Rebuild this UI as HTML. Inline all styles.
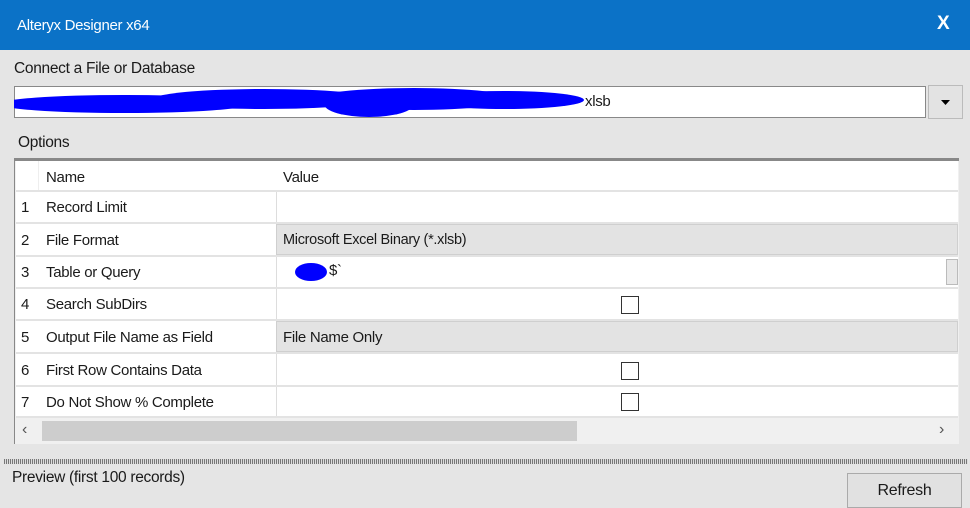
<!DOCTYPE html>
<html><head><meta charset="utf-8"><style>
*{margin:0;padding:0;box-sizing:border-box}
body{width:970px;height:508px;background:#e5e5e5;font-family:"Liberation Sans",sans-serif;font-size:15px;color:#1a1a1a;position:relative;overflow:hidden;letter-spacing:-0.3px}
.a{position:absolute}
.title{left:0;top:0;width:970px;height:50px;background:#0b72c7;color:#fff}
.row{position:absolute;left:16px;width:942px;border-bottom:2px solid #e3e3e3;background:#fff}
.num{position:absolute;left:5px}
.nm{position:absolute;left:30px}
.val{position:absolute;left:260px;right:0;top:0;bottom:0;border-left:1px solid #ddd}
.grey{background:#e3e3e3;border:1px solid #cfcfcf}
.cb{position:absolute;left:344px;width:18px;height:18px;border:1.5px solid #333;background:#fff}
</style></head><body>
<div class="a title"><span class="a" style="left:17px;top:17px;font-size:15px">Alteryx Designer x64</span><span class="a" style="left:937px;top:13px;font-size:19px;font-weight:bold">X</span></div>
<div class="a" style="left:14px;top:60px;font-size:15.5px">Connect a File or Database</div>
<div class="a" style="left:14px;top:86px;width:912px;height:32px;background:#fff;border:1px solid #888"></div>
<svg class="a" style="left:14px;top:86px" width="600" height="34"><ellipse cx="110" cy="18" rx="125" ry="9" fill="#0000ff"/><ellipse cx="250" cy="13" rx="110" ry="10" fill="#0000ff"/><ellipse cx="400" cy="13" rx="100" ry="11" fill="#0000ff"/><ellipse cx="490" cy="14" rx="80" ry="9" fill="#0000ff"/><ellipse cx="355" cy="18" rx="45" ry="13" fill="#0000ff"/></svg>
<div class="a" style="left:585px;top:93px">xlsb</div>
<div class="a" style="left:928px;top:85px;width:35px;height:34px;border:1px solid #bbb;background:#e3e3e3"></div>
<svg class="a" style="left:941px;top:100px" width="10" height="6"><path d="M0 0H9L4.5 5Z" fill="#000"/></svg>
<div class="a" style="left:18px;top:134px;font-size:15.5px">Options</div>
<div class="a" style="left:14px;top:158px;width:945px;height:286px;background:#f0f0f0;border-top:3px solid #888;border-left:1px solid #888"></div>
<div class="row" style="top:161px;height:31px"><span class="nm" style="top:8px">Name</span><div class="val" style="border:none"><span class="a" style="left:7px;top:8px">Value</span></div><div class="a" style="left:22px;top:0;bottom:0;border-left:1px solid #eee"></div></div>
<div class="row" style="top:192px;height:32px"><span class="num" style="top:7px">1</span><span class="nm" style="top:7px">Record Limit</span><div class="val"></div></div>
<div class="row" style="top:224px;height:33px"><span class="num" style="top:8px">2</span><span class="nm" style="top:8px">File Format</span><div class="val grey"><span class="a" style="left:6px;top:7px;font-size:14.5px">Microsoft Excel Binary (*.xlsb)</span></div></div>
<div class="row" style="top:257px;height:32px"><span class="num" style="top:7px">3</span><span class="nm" style="top:7px">Table or Query</span><div class="val"><svg class="a" style="left:8px;top:4px" width="60" height="22"><ellipse cx="26" cy="11" rx="16" ry="9" fill="#0000ff"/></svg><span class="a" style="left:52px;top:5px">$`</span><div class="a" style="right:0;top:2px;width:12px;height:26px;border:1px solid #bbb;background:#e8e8e8"></div></div></div>
<div class="row" style="top:289px;height:32px"><span class="num" style="top:7px">4</span><span class="nm" style="top:7px">Search SubDirs</span><div class="val"><div class="cb" style="top:7px"></div></div></div>
<div class="row" style="top:321px;height:33px"><span class="num" style="top:8px">5</span><span class="nm" style="top:8px">Output File Name as Field</span><div class="val grey"><span class="a" style="left:6px;top:7px">File Name Only</span></div></div>
<div class="row" style="top:354px;height:33px"><span class="num" style="top:8px">6</span><span class="nm" style="top:8px">First Row Contains Data</span><div class="val"><div class="cb" style="top:8px"></div></div></div>
<div class="row" style="top:387px;height:31px"><span class="num" style="top:7px">7</span><span class="nm" style="top:7px">Do Not Show % Complete</span><div class="val"><div class="cb" style="top:6px"></div></div></div>
<div class="a" style="left:15px;top:419px;width:943px;height:24px;background:#f0f0f0"></div>
<div class="a" style="left:42px;top:421px;width:535px;height:20px;background:#cdcdcd"></div>
<span class="a" style="left:22px;top:421px;color:#555;font-size:16px">‹</span>
<span class="a" style="left:939px;top:421px;color:#555;font-size:16px">›</span>
<div class="a" style="left:4px;top:459px;width:964px;height:5px;background:repeating-linear-gradient(90deg,#777 0 1px,#ddd 1px 2px)"></div>
<div class="a" style="left:12px;top:469px;font-size:15.5px">Preview (first 100 records)</div>
<div class="a" style="left:847px;top:473px;width:115px;height:35px;border:1px solid #aaa;background:#e1e1e1;text-align:center;line-height:33px;font-size:16px">Refresh</div>
</body></html>
